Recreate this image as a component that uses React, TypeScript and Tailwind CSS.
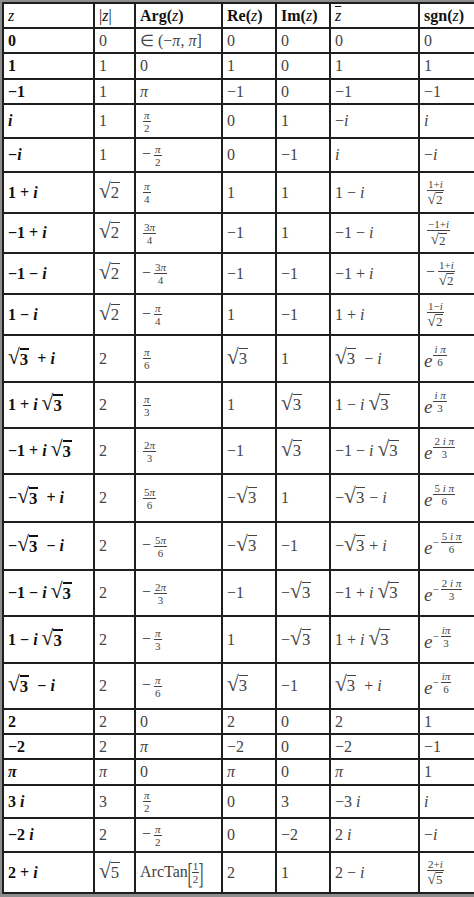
import React, { ReactNode } from "react";

const pi = <i>π</i>;
const ii = <i>i</i>;

// small stacked fraction
const Frac = ({ n, d, cls = "text-[11px] mx-[3px]" }: { n: ReactNode; d: ReactNode; cls?: string }) => (
  <span className={`inline-flex flex-col items-center align-middle leading-[1.1] ${cls}`}>
    <span className="px-[1px] whitespace-nowrap">{n}</span>
    <span className="self-stretch border-t border-current text-center">{d}</span>
  </span>
);

// radical: glyph plus a vinculum over the radicand
const Sqrt = ({ children, bold }: { children: ReactNode; bold?: boolean }) => (
  <span className="inline-flex items-start">
    <span className="text-[1.35em] leading-none">√</span>
    <span
      className={`mt-[0.08em] leading-[1.15] pr-[1px] text-[1.05em] border-t-current ${
        bold ? "border-t-2" : "border-t-[1.5px]"
      }`}
    >
      {children}
    </span>
  </span>
);

// small radical used as a denominator in sgn column
const SmallSqrt = ({ children }: { children: ReactNode }) => (
  <span className="inline-flex items-start text-[13px] leading-none">
    <span className="text-[1.2em] leading-none">√</span>
    <span className="mt-[0.1em] leading-[1.1] pr-[1px] border-t border-t-current">{children}</span>
  </span>
);

// e raised to a fraction
const Exp = ({ neg, n, d }: { neg?: boolean; n: ReactNode; d: ReactNode }) => (
  <span className="inline-flex items-start pb-[5px]">
    <i className="text-[19px] leading-none pt-[8px]">e</i>
    <span className="inline-flex items-center text-[11px] leading-none">
      {neg && <span className="mr-[1px]">−</span>}
      <Frac n={n} d={d} cls="text-[11px] mx-[1px]" />
    </span>
  </span>
);

const NegFrac = ({ n, d }: { n: ReactNode; d: ReactNode }) => (
  <>
    <span className="ml-[2px]">−</span>
    <Frac n={n} d={d} />
  </>
);

const s2 = <Sqrt>2</Sqrt>;
const s3 = <Sqrt>3</Sqrt>;
const b3 = <Sqrt bold>3</Sqrt>;
const d2 = <SmallSqrt>2</SmallSqrt>;

const header: ReactNode[] = [
  <i className="font-normal">z</i>,
  <span className="font-normal">
    |<i>z</i>|
  </span>,
  <span>
    Arg(<i className="font-normal">z</i>)
  </span>,
  <span>
    Re(<i className="font-normal">z</i>)
  </span>,
  <span>
    Im(<i className="font-normal">z</i>)
  </span>,
  <i className="font-normal overline">z</i>,
  <span>
    sgn(<i className="font-normal">z</i>)
  </span>,
];

const rows: ReactNode[][] = [
  [
    "0",
    "0",
    <span>
      ∈ (−{pi}, {pi}]
    </span>,
    "0",
    "0",
    "0",
    "0",
  ],
  ["1", "1", "0", "1", "0", "1", "1"],
  ["−1", "1", pi, "−1", "0", "−1", "−1"],
  [ii, "1", <Frac n={pi} d="2" />, "0", "1", <>−{ii}</>, ii],
  [<>−{ii}</>, "1", <NegFrac n={pi} d="2" />, "0", "−1", ii, <>−{ii}</>],
  [
    <>1 + {ii}</>,
    s2,
    <Frac n={pi} d="4" />,
    "1",
    "1",
    <>1 − {ii}</>,
    <Frac n={<>1+{ii}</>} d={d2} />,
  ],
  [
    <>−1 + {ii}</>,
    s2,
    <Frac n={<>3{pi}</>} d="4" />,
    "−1",
    "1",
    <>−1 − {ii}</>,
    <Frac n={<>−1+{ii}</>} d={d2} />,
  ],
  [
    <>−1 − {ii}</>,
    s2,
    <NegFrac n={<>3{pi}</>} d="4" />,
    "−1",
    "−1",
    <>−1 + {ii}</>,
    <NegFrac n={<>1+{ii}</>} d={d2} />,
  ],
  [
    <>1 − {ii}</>,
    s2,
    <NegFrac n={pi} d="4" />,
    "1",
    "−1",
    <>1 + {ii}</>,
    <Frac n={<>1−{ii}</>} d={d2} />,
  ],
  [
    <>
      {b3}&nbsp; + {ii}
    </>,
    "2",
    <Frac n={pi} d="6" />,
    s3,
    "1",
    <>
      {s3}&nbsp; − {ii}
    </>,
    <Exp n={<>{ii} {pi}</>} d="6" />,
  ],
  [
    <>
      1 + {ii} {b3}
    </>,
    "2",
    <Frac n={pi} d="3" />,
    "1",
    s3,
    <>
      1 − {ii} {s3}
    </>,
    <Exp n={<>{ii} {pi}</>} d="3" />,
  ],
  [
    <>
      −1 + {ii} {b3}
    </>,
    "2",
    <Frac n={<>2{pi}</>} d="3" />,
    "−1",
    s3,
    <>
      −1 − {ii} {s3}
    </>,
    <Exp n={<>2 {ii} {pi}</>} d="3" />,
  ],
  [
    <>
      −{b3}&nbsp; + {ii}
    </>,
    "2",
    <Frac n={<>5{pi}</>} d="6" />,
    <>−{s3}</>,
    "1",
    <>
      −{s3} − {ii}
    </>,
    <Exp n={<>5 {ii} {pi}</>} d="6" />,
  ],
  [
    <>
      −{b3}&nbsp; − {ii}
    </>,
    "2",
    <NegFrac n={<>5{pi}</>} d="6" />,
    <>−{s3}</>,
    "−1",
    <>
      −{s3} + {ii}
    </>,
    <Exp neg n={<>5 {ii} {pi}</>} d="6" />,
  ],
  [
    <>
      −1 − {ii} {b3}
    </>,
    "2",
    <NegFrac n={<>2{pi}</>} d="3" />,
    "−1",
    <>−{s3}</>,
    <>
      −1 + {ii} {s3}
    </>,
    <Exp neg n={<>2 {ii} {pi}</>} d="3" />,
  ],
  [
    <>
      1 − {ii} {b3}
    </>,
    "2",
    <NegFrac n={pi} d="3" />,
    "1",
    <>−{s3}</>,
    <>
      1 + {ii} {s3}
    </>,
    <Exp neg n={<>{ii}{pi}</>} d="3" />,
  ],
  [
    <>
      {b3}&nbsp; − {ii}
    </>,
    "2",
    <NegFrac n={pi} d="6" />,
    s3,
    "−1",
    <>
      {s3}&nbsp; + {ii}
    </>,
    <Exp neg n={<>{ii}{pi}</>} d="6" />,
  ],
  ["2", "2", "0", "2", "0", "2", "1"],
  ["−2", "2", pi, "−2", "0", "−2", "−1"],
  [pi, pi, "0", pi, "0", pi, "1"],
  [<>3 {ii}</>, "3", <Frac n={pi} d="2" />, "0", "3", <>−3 {ii}</>, ii],
  [<>−2 {ii}</>, "2", <NegFrac n={pi} d="2" />, "0", "−2", <>2 {ii}</>, <>−{ii}</>],
  [
    <>2 + {ii}</>,
    <Sqrt>5</Sqrt>,
    <>
      ArcTan
      <span className="inline-flex items-center align-middle">
        <span className="text-[30px] leading-none font-light scale-x-50 -mx-[3px]">[</span>
        <Frac n="1" d="2" cls="text-[11px] mx-0" />
        <span className="text-[30px] leading-none font-light scale-x-50 -mx-[3px]">]</span>
      </span>
    </>,
    "2",
    "1",
    <>2 − {ii}</>,
    <Frac n={<>2+{ii}</>} d={<SmallSqrt>5</SmallSqrt>} />,
  ],
];

export default function App() {
  return (
    <div className="w-[474px] h-[897px] overflow-hidden bg-[#8d8d8d] pt-[2px] pl-[2px] font-['Liberation_Serif',serif] text-[16px]">
      <div className="w-[474px] grid grid-cols-[89px_39px_85px_52px_52px_87px_54px] grid-rows-[23px_23px_24px_23px_32px_32px_39px_38px_39px_39px_45px_44px_44px_46px_46px_44px_45px_44px_23px_23px_24px_31px_32px_39px] gap-[2px] p-[2px] bg-[#1e1e1e]">
        {header.map((h, i) => (
          <div key={`h${i}`} className="bg-white flex items-center pl-[4px] font-bold text-[#111]">
            {h}
          </div>
        ))}
        {rows.map((r, ri) =>
          r.map((c, ci) => (
            <div
              key={`${ri}-${ci}`}
              className={`bg-white flex items-center pl-[4px] whitespace-nowrap ${
                ci === 0 ? "font-bold text-[#111]" : "text-[#444]"
              }`}
            >
              <span>{c}</span>
            </div>
          ))
        )}
      </div>
    </div>
  );
}
